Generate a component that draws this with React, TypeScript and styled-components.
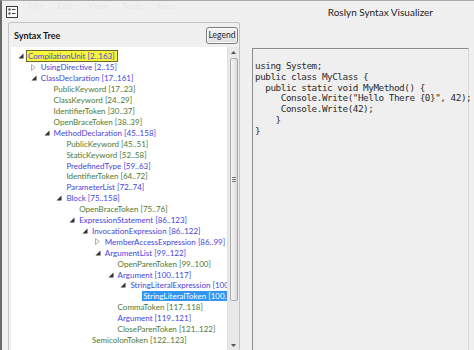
import styled, { createGlobalStyle } from "styled-components";

const GlobalStyle = createGlobalStyle`
  html, body {
    margin: 0;
    padding: 0;
    background: #f0f0f0;
    overflow: hidden;
  }
  #root {
    width: 474px;
    height: 350px;
  }
`;

type Kind = "node" | "token";
type Expander = "open" | "closed" | "none";

interface TreeItem {
  label: string;
  range: string;
  kind: Kind;
  level: number;
  expander: Expander;
  mark?: "highlight" | "selected";
}

const treeData: TreeItem[] = [
  { label: "CompilationUnit", range: "[2..163]", kind: "node", level: 0, expander: "open", mark: "highlight" },
  { label: "UsingDirective", range: "[2..15]", kind: "node", level: 1, expander: "closed" },
  { label: "ClassDeclaration", range: "[17..161]", kind: "node", level: 1, expander: "open" },
  { label: "PublicKeyword", range: "[17..23]", kind: "token", level: 2, expander: "none" },
  { label: "ClassKeyword", range: "[24..29]", kind: "token", level: 2, expander: "none" },
  { label: "IdentifierToken", range: "[30..37]", kind: "token", level: 2, expander: "none" },
  { label: "OpenBraceToken", range: "[38..39]", kind: "token", level: 2, expander: "none" },
  { label: "MethodDeclaration", range: "[45..158]", kind: "node", level: 2, expander: "open" },
  { label: "PublicKeyword", range: "[45..51]", kind: "token", level: 3, expander: "none" },
  { label: "StaticKeyword", range: "[52..58]", kind: "token", level: 3, expander: "none" },
  { label: "PredefinedType", range: "[59..63]", kind: "node", level: 3, expander: "none" },
  { label: "IdentifierToken", range: "[64..72]", kind: "token", level: 3, expander: "none" },
  { label: "ParameterList", range: "[72..74]", kind: "node", level: 3, expander: "none" },
  { label: "Block", range: "[75..158]", kind: "node", level: 3, expander: "open" },
  { label: "OpenBraceToken", range: "[75..76]", kind: "token", level: 4, expander: "none" },
  { label: "ExpressionStatement", range: "[86..123]", kind: "node", level: 4, expander: "open" },
  { label: "InvocationExpression", range: "[86..122]", kind: "node", level: 5, expander: "open" },
  { label: "MemberAccessExpression", range: "[86..99]", kind: "node", level: 6, expander: "closed" },
  { label: "ArgumentList", range: "[99..122]", kind: "node", level: 6, expander: "open" },
  { label: "OpenParenToken", range: "[99..100]", kind: "token", level: 7, expander: "none" },
  { label: "Argument", range: "[100..117]", kind: "node", level: 7, expander: "open" },
  { label: "StringLiteralExpression", range: "[100..117]", kind: "node", level: 8, expander: "open" },
  { label: "StringLiteralToken", range: "[100..117]", kind: "token", level: 9, expander: "none", mark: "selected" },
  { label: "CommaToken", range: "[117..118]", kind: "token", level: 7, expander: "none" },
  { label: "Argument", range: "[119..121]", kind: "node", level: 7, expander: "none" },
  { label: "CloseParenToken", range: "[121..122]", kind: "token", level: 7, expander: "none" },
  { label: "SemicolonToken", range: "[122..123]", kind: "token", level: 5, expander: "none" },
];

const codeLines = [
  "using System;",
  "public class MyClass {",
  "  public static void MyMethod() {",
  "     Console.Write(\"Hello There {0}\", 42);",
  "     Console.Write(42);",
  "    }",
  "}",
];

const Window = styled.div`
  width: 474px;
  height: 350px;
  box-sizing: border-box;
  border-left: 2px solid #6a6a6a;
  border-top: 1px solid #a8a8a8;
  background: #f0f0f0;
  display: flex;
  flex-direction: column;
  overflow: hidden;
  font-family: "Lato", "Open Sans", sans-serif;
`;

const TitleBar = styled.div`
  height: 21px;
  flex: none;
  display: flex;
  align-items: center;
  padding-left: 4px;
`;

const AppIcon = styled.div`
  width: 12px;
  height: 12px;
  display: flex;
`;

const MenuGhost = styled.span`
  margin-left: 10px;
  align-self: flex-start;
  margin-top: 1px;
  font-size: 7px;
  color: #e3e5ea;
  letter-spacing: 1px;
  word-spacing: 12px;
`;

const Title = styled.span`
  margin-left: auto;
  margin-right: 41px;
  font-size: 10px;
  color: #1e1e1e;
`;

const Body = styled.div`
  flex: 1;
  display: flex;
  padding-left: 6px;
  min-height: 0;
`;

const TreePanel = styled.div`
  width: 232px;
  box-sizing: border-box;
  border: 1px solid #c4c4c4;
  border-bottom: none;
  border-radius: 3px 3px 0 0;
  padding-left: 2px;
  display: flex;
  flex-direction: column;
  background: #f0f0f0;
`;

const PanelHeader = styled.div`
  height: 24px;
  flex: none;
  display: flex;
  align-items: center;
  justify-content: space-between;
  padding: 0 1px 0 3px;
`;

const HeaderTitle = styled.span`
  font-size: 9px;
  font-weight: 700;
  color: #1a1a1a;
`;

const LegendButton = styled.button`
  height: 17px;
  width: 32px;
  padding: 0;
  font-family: "Lato", "Open Sans", sans-serif;
  font-size: 8.5px;
  color: #2a2a2a;
  border: 1px solid #7c7c7c;
  border-radius: 3px;
  background: linear-gradient(#f6f6f6, #dedede);
  box-shadow: inset 0 0 0 1px #fbfbfb;
`;

const TreeArea = styled.div`
  flex: 1;
  display: flex;
  background: #ffffff;
  min-height: 0;
`;

const TreeList = styled.div`
  flex: 1;
  overflow: hidden;
  padding-top: 4px;
`;

const Row = styled.div<{ $level: number }>`
  height: 10.92px;
  display: flex;
  align-items: center;
  padding-left: ${(p) => 7 + p.$level * 12.8}px;
  white-space: nowrap;
  font-size: 8px;
`;

const ExpanderBox = styled.span`
  width: 9px;
  flex: none;
  display: flex;
  align-items: center;
`;

const Label = styled.span<{ $kind: Kind; $mark?: "highlight" | "selected" }>`
  padding: 0 2px 0 1px;
  line-height: 10px;
  color: ${(p) =>
    p.$mark === "selected" ? "#ffffff" : p.$kind === "node" ? "#4545dc" : "#4e7a36"};
  background: ${(p) =>
    p.$mark === "highlight" ? "#f8f53a" : p.$mark === "selected" ? "#3296f0" : "transparent"};
  outline: ${(p) => (p.$mark === "highlight" ? "1px solid #6a6a30" : "none")};
  ${(p) => p.$mark === "selected" && "flex: 1;"}
`;

const Scrollbar = styled.div`
  width: 11px;
  flex: none;
  display: flex;
  flex-direction: column;
  align-items: center;
  background: #e9e9e9;
  border-left: 1px solid #e0e0e0;
`;

const ArrowBox = styled.div`
  height: 10px;
  flex: none;
  display: flex;
  align-items: center;
  justify-content: center;
`;

const Thumb = styled.div`
  width: 8px;
  height: 243px;
  margin-top: 1px;
  box-sizing: border-box;
  border: 1px solid #a8a8a8;
  border-radius: 2px;
  background: linear-gradient(90deg, #f6f6f6, #dcdcdc);
  display: flex;
  align-items: center;
  justify-content: center;
`;

const Spacer = styled.div`
  flex: 1;
`;

const Splitter = styled.div`
  width: 12px;
  flex: none;
`;

const CodePanel = styled.div`
  flex: none;
  width: 217px;
  margin-top: 26px;
  box-sizing: border-box;
  border: 1px solid #8c8c8c;
  border-right-color: #d8d8d8;
  border-bottom: none;
  background: #efefef;
  padding: 12px 0 0 2px;
`;

const CodeLine = styled.div`
  height: 10.8px;
  line-height: 10.8px;
  white-space: pre;
  font-family: "DejaVu Sans Mono", "Liberation Mono", monospace;
  font-size: 9.3px;
  letter-spacing: -0.45px;
  color: #2c2c2c;
`;

const ExpanderIcon = ({ state }: { state: Expander }) => {
  if (state === "open") {
    return (
      <svg width="6" height="6" viewBox="0 0 6 6">
        <polygon points="5.5,0.5 5.5,5.5 0.5,5.5" fill="#303030" />
      </svg>
    );
  }
  if (state === "closed") {
    return (
      <svg width="5" height="7" viewBox="0 0 5 7">
        <polygon points="0.5,0.5 4.2,3.5 0.5,6.5" fill="#fff" stroke="#9a9a9a" strokeWidth="0.8" />
      </svg>
    );
  }
  return null;
};

const WindowIcon = () => (
  <svg width="12" height="12" viewBox="0 0 12 12">
    <rect x="0.5" y="0.5" width="11" height="11" fill="#fafafa" stroke="#3a3a3a" />
    <rect x="2.5" y="2.5" width="2" height="2" fill="#3a3a3a" />
    <rect x="2.5" y="6.5" width="2" height="2" fill="#3a3a3a" />
    <line x1="6" y1="3.5" x2="9.5" y2="3.5" stroke="#3a3a3a" />
    <line x1="6" y1="7.5" x2="9.5" y2="7.5" stroke="#3a3a3a" />
  </svg>
);

export default function App() {
  return (
    <>
      <GlobalStyle />
      <Window>
        <TitleBar>
          <AppIcon>
            <WindowIcon />
          </AppIcon>
          <MenuGhost>File Edit View Tools Help</MenuGhost>
          <Title>Roslyn Syntax Visualizer</Title>
        </TitleBar>
        <Body>
          <TreePanel>
            <PanelHeader>
              <HeaderTitle>Syntax Tree</HeaderTitle>
              <LegendButton>Legend</LegendButton>
            </PanelHeader>
            <TreeArea>
              <TreeList>
                {treeData.map((item, i) => (
                  <Row key={i} $level={item.level}>
                    <ExpanderBox>
                      <ExpanderIcon state={item.expander} />
                    </ExpanderBox>
                    <Label $kind={item.kind} $mark={item.mark}>
                      {item.label} {item.range}
                    </Label>
                  </Row>
                ))}
              </TreeList>
              <Scrollbar>
                <ArrowBox>
                  <svg width="5" height="3" viewBox="0 0 5 3">
                    <polygon points="0,3 2.5,0 5,3" fill="#555" />
                  </svg>
                </ArrowBox>
                <Thumb>
                  <svg width="4" height="5" viewBox="0 0 4 5">
                    <line x1="0" y1="0.5" x2="4" y2="0.5" stroke="#777" />
                    <line x1="0" y1="2.5" x2="4" y2="2.5" stroke="#777" />
                    <line x1="0" y1="4.5" x2="4" y2="4.5" stroke="#777" />
                  </svg>
                </Thumb>
                <Spacer />
                <ArrowBox>
                  <svg width="5" height="3" viewBox="0 0 5 3">
                    <polygon points="0,0 2.5,3 5,0" fill="#555" />
                  </svg>
                </ArrowBox>
              </Scrollbar>
            </TreeArea>
          </TreePanel>
          <Splitter />
          <CodePanel>
            {codeLines.map((line, i) => (
              <CodeLine key={i}>{line}</CodeLine>
            ))}
          </CodePanel>
        </Body>
      </Window>
    </>
  );
}
